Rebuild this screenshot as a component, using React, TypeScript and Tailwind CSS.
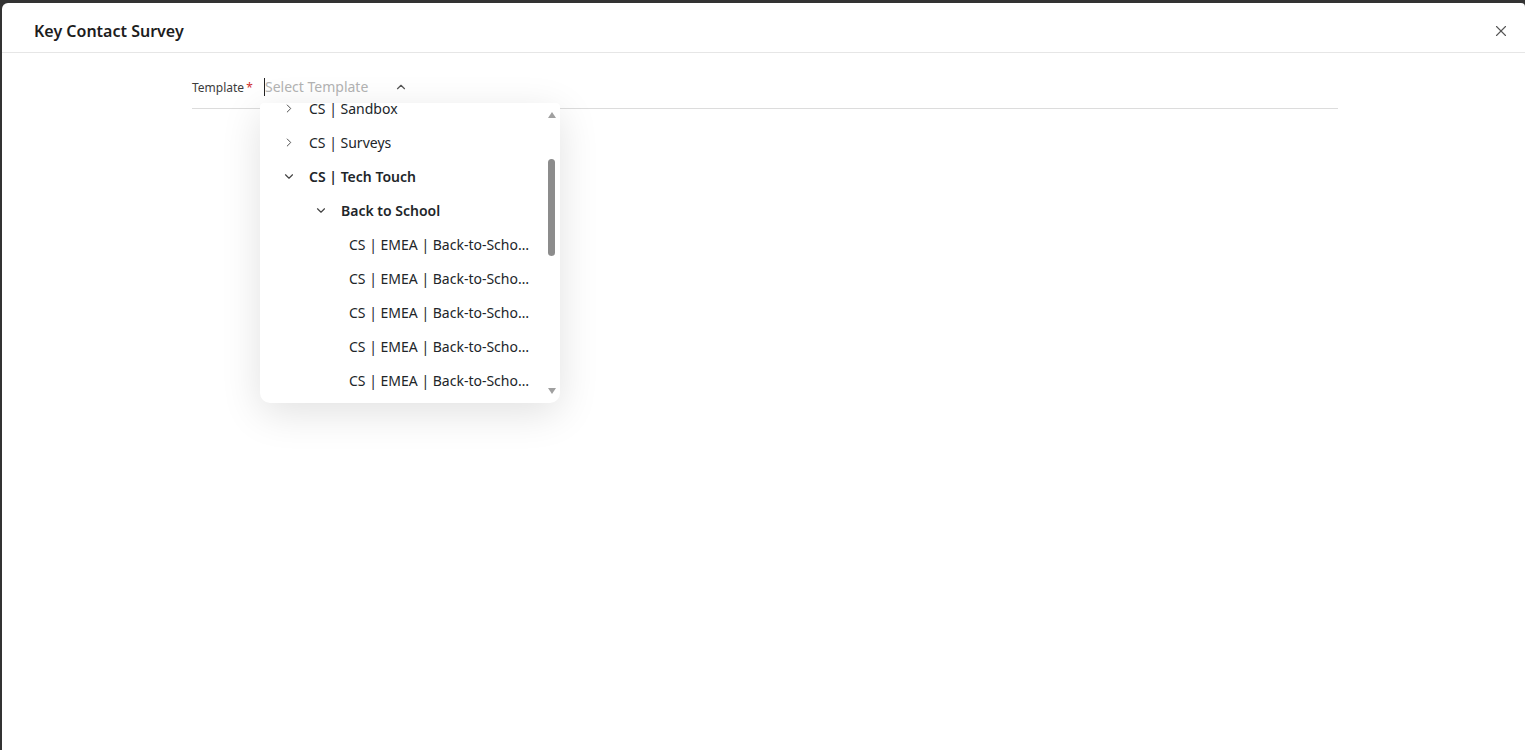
import { ChevronDown, ChevronRight, ChevronUp, X } from 'lucide-react';

const font = { fontFamily: '"Noto Sans", "Open Sans", sans-serif' };

type Row = { label: string; level: number; kind: 'closed' | 'open' | 'leaf'; bold?: boolean };

const rows: Row[] = [
  { label: 'CS | Sandbox', level: 0, kind: 'closed' },
  { label: 'CS | Surveys', level: 0, kind: 'closed' },
  { label: 'CS | Tech Touch', level: 0, kind: 'open', bold: true },
  { label: 'Back to School', level: 1, kind: 'open', bold: true },
  { label: 'CS | EMEA | Back-to-School Survey A', level: 2, kind: 'leaf' },
  { label: 'CS | EMEA | Back-to-School Survey B', level: 2, kind: 'leaf' },
  { label: 'CS | EMEA | Back-to-School Survey C', level: 2, kind: 'leaf' },
  { label: 'CS | EMEA | Back-to-School Survey D', level: 2, kind: 'leaf' },
  { label: 'CS | EMEA | Back-to-School Survey E', level: 2, kind: 'leaf' },
];

function TreeRow({ row }: { row: Row }) {
  const pad = row.level === 0 ? 'pl-[22px]' : row.level === 1 ? 'pl-[54px]' : 'pl-[89px]';
  return (
    <div className={`flex h-[34px] items-center pr-[26px] ${pad}`}>
      {row.kind !== 'leaf' && (
        <span className="mr-[13px] flex w-[14px] items-center justify-center text-[#444]">
          {row.kind === 'open' ? (
            <ChevronDown size={15} strokeWidth={2} />
          ) : (
            <ChevronRight size={15} strokeWidth={1.6} />
          )}
        </span>
      )}
      <span
        className={`truncate text-[14px] text-[#212529] ${row.bold ? 'font-semibold' : 'font-normal'}`}
      >
        {row.label}
      </span>
    </div>
  );
}

export default function App() {
  return (
    <div className="h-[750px] overflow-hidden bg-[#333333] pl-[2px] pt-[3px]" style={font}>
      <div className="h-[760px] rounded-tl-[6px] rounded-tr-[4px] bg-white">
        <div className="flex h-[50px] items-center justify-between border-b border-[#e6e6e6] pl-[32px] pr-[15px] pt-[6px]">
          <h1 className="text-[16px] font-semibold text-[#1d1d1d]">Key Contact Survey</h1>
          <button className="text-[#555]">
            <X size={18} strokeWidth={1.5} />
          </button>
        </div>

        <div className="ml-[190px] mr-[187px] pt-[22px]">
          <div className="relative flex h-[34px] items-center border-b border-[#dcdcdc]">
            <label className="w-[72px] pb-[8px] text-[12px] text-[#3c3c3c]">
              Template<span className="ml-[2px] text-[#d0312d]">*</span>
            </label>
            <div className="flex items-center pb-[10px]">
              <span className="h-[18px] w-px bg-[#222]" />
              <span className="w-[129px] text-[14px] text-[#b3b3b3]">Select Template</span>
              <ChevronUp size={14} strokeWidth={2} className="text-[#555]" />
            </div>

            <div className="absolute left-[68px] top-[28px] z-10 h-[300px] w-[300px] overflow-hidden rounded-b-[10px] rounded-t-[4px] bg-white shadow-[0_10px_40px_rgba(0,0,0,0.12)]">
              <div className="-mt-[12px]">
                {rows.map((r) => (
                  <TreeRow key={r.label} row={r} />
                ))}
              </div>
              <div className="absolute bottom-0 right-[2px] top-0 w-[12px]">
                <svg className="absolute left-[1px] top-[8px]" width="10" height="8" viewBox="0 0 10 8">
                  <path d="M5 1 L9 7 L1 7 Z" fill="#a0a0a0" />
                </svg>
                <div className="absolute left-[2px] top-[56px] h-[97px] w-[7px] rounded-full bg-[#8c8c8c]" />
                <svg className="absolute bottom-[8px] left-[1px]" width="10" height="8" viewBox="0 0 10 8">
                  <path d="M1 1 L9 1 L5 7 Z" fill="#a0a0a0" />
                </svg>
              </div>
            </div>
          </div>
        </div>
      </div>
    </div>
  );
}
